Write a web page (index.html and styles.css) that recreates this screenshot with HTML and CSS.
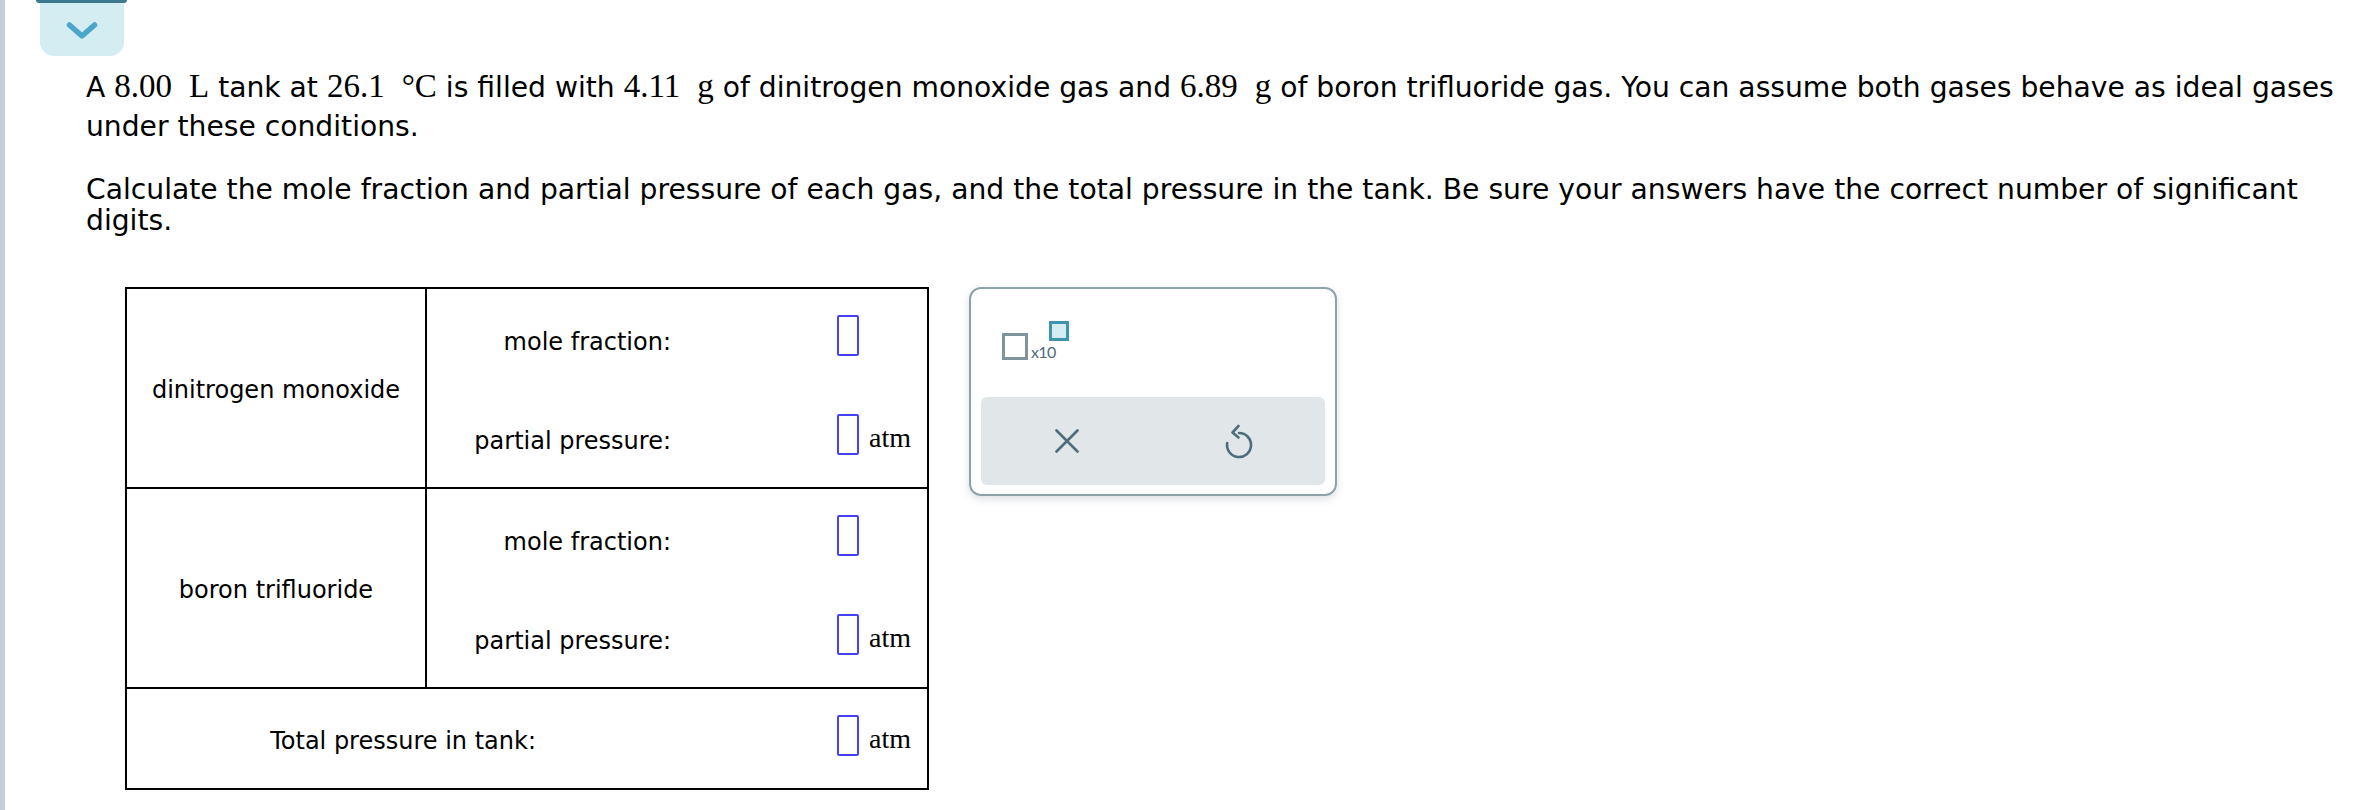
FILE: index.html
```html
<!DOCTYPE html>
<html lang="en">
<head>
<meta charset="utf-8">
<title>Mole fraction and partial pressure</title>
<link rel="stylesheet" href="styles.css">
</head>
<body>
<div class="page">
  <div class="rail"></div>
  <div class="content">
    <button class="toggle" type="button" aria-label="Collapse">
      <svg class="chev" width="84" height="56" viewBox="0 0 84 56"><polyline points="29.5,25 42,36 54.5,25" fill="none" stroke="#4ba7c9" stroke-width="5.5" stroke-linecap="round" stroke-linejoin="round"/></svg>
    </button>
    <p class="q"><span>A</span> <span class="m">8.00</span> <span class="m unit">L</span> <span>tank at</span> <span class="m">26.1</span> <span class="m unit">°C</span> <span>is filled with</span> <span class="m">4.11</span> <span class="m unit">g</span> <span>of dinitrogen monoxide gas and</span> <span class="m">6.89</span> <span class="m unit">g</span> <span>of boron trifluoride gas. You can assume both gases behave as ideal gases</span> <span>under these conditions.</span></p>
    <p class="q q2"><span>Calculate the mole fraction and partial pressure of each gas, and the total pressure in the tank. Be sure your answers have the correct number of significant</span> <span>digits.</span></p>
    <div class="work">
      <div class="answers">
        <div class="row">
          <div class="gas">dinitrogen monoxide</div>
          <div class="fields">
            <div class="field"><span class="label">mole fraction:</span><span class="box"></span></div>
            <div class="field"><span class="label">partial pressure:</span><span class="box"></span><span class="atm">atm</span></div>
          </div>
        </div>
        <div class="row">
          <div class="gas">boron trifluoride</div>
          <div class="fields">
            <div class="field"><span class="label">mole fraction:</span><span class="box"></span></div>
            <div class="field"><span class="label">partial pressure:</span><span class="box"></span><span class="atm">atm</span></div>
          </div>
        </div>
        <div class="row total">
          <span class="label">Total pressure in tank:</span><span class="box"></span><span class="atm">atm</span>
        </div>
      </div>
      <div class="widget">
        <div class="sci">
          <span class="sci-base"></span><span class="sci-x">x10</span><span class="sci-sup"></span>
        </div>
        <div class="pad">
          <button class="pad-btn" type="button" aria-label="Clear">
            <svg width="24" height="24" viewBox="0 0 24 24"><path d="M1.5 1.5 L22.5 22.5 M22.5 1.5 L1.5 22.5" fill="none" stroke="#4d6d7b" stroke-width="2.6" stroke-linecap="round"/></svg>
          </button>
          <button class="pad-btn" type="button" aria-label="Undo">
            <svg class="undo" width="32" height="36" viewBox="0 0 32 36"><path d="M16 10 A12 12 0 1 1 4.2 20" fill="none" stroke="#4d6d7b" stroke-width="2.6" stroke-linecap="round"/><polyline points="15.5,3 9.5,9.5 15.5,14.5" fill="none" stroke="#4d6d7b" stroke-width="2.6" stroke-linecap="round" stroke-linejoin="round"/></svg>
          </button>
        </div>
      </div>
    </div>
  </div>
</div>
</body>
</html>
```

FILE: styles.css
```css
html, body {
  margin: 0;
  padding: 0;
  background: #ffffff;
  overflow: hidden;
}

.page {
  display: flex;
  min-height: 810px;
}

.rail {
  flex: none;
  width: 5px;
  background: #c5d0d6;
}

.content {
  flex: 1;
  min-width: 0;
  padding-left: 35px;
  font-family: "DejaVu Sans", Verdana, sans-serif;
  color: #000000;
}

.toggle {
  position: relative;
  display: block;
  width: 84px;
  height: 56px;
  margin: 0;
  padding: 0;
  border: 0;
  background: #d4edf3;
  border-radius: 0 0 14px 14px;
  cursor: pointer;
}

.toggle::before {
  content: "";
  position: absolute;
  left: -4px;
  right: -3px;
  top: 0;
  height: 3px;
  background: #3b7a8e;
  border-radius: 0 0 3px 3px;
}

.chev {
  display: block;
}

.q {
  width: 2288px;
  margin: 5px 0 0 46px;
  font-size: 28.2px;
  line-height: 31px;
}

.q2 {
  margin-top: 32px;
}

.m {
  font-family: "Liberation Serif", "Times New Roman", serif;
  font-size: 33px;
  line-height: 50px;
}

.unit {
  margin-left: 8px;
}

.work {
  display: flex;
  align-items: flex-start;
  gap: 40px;
  margin: 51px 0 0 85px;
}

.answers {
  flex: none;
  width: 804px;
  box-sizing: border-box;
  border: 2px solid #000000;
  font-size: 24px;
}

.row {
  display: flex;
  height: 200px;
  box-sizing: border-box;
  border-bottom: 2px solid #000000;
}

.row.total {
  height: 99px;
  border-bottom: 0;
  align-items: center;
}

.gas {
  flex: none;
  width: 300px;
  box-sizing: border-box;
  border-right: 2px solid #000000;
  display: flex;
  align-items: center;
  justify-content: center;
  padding-top: 4px;
}

.fields {
  flex: 1;
  display: flex;
  flex-direction: column;
}

.field {
  height: 99px;
  display: flex;
  align-items: center;
}

.label {
  flex: none;
  width: 244px;
  text-align: right;
  padding-top: 6px;
}

.total .label {
  width: 409px;
  padding-top: 4px;
}

.box {
  flex: none;
  width: 22px;
  height: 41px;
  box-sizing: border-box;
  margin-left: 166px;
  border: 2px solid #4343ff;
  border-radius: 2px;
  margin-bottom: 6px;
}

.total .box {
  margin-left: 301px;
}

.atm {
  margin-left: 10px;
  font-family: "Liberation Serif", "Times New Roman", serif;
  font-size: 28px;
}

.widget {
  flex: none;
  width: 368px;
  height: 209px;
  box-sizing: border-box;
  border: 2px solid #8ea2ac;
  border-radius: 12px;
  padding: 0 10px 9px;
  display: flex;
  flex-direction: column;
  box-shadow: 0 3px 8px rgba(60, 80, 90, 0.18);
}

.sci {
  flex: 1;
  display: flex;
  align-items: flex-start;
  padding: 32px 0 0 21px;
}

.sci-base {
  flex: none;
  width: 26px;
  height: 27px;
  box-sizing: border-box;
  margin-top: 12px;
  border: 3px solid #7f949e;
}

.sci-x {
  margin: 23px 0 0 3px;
  font-family: Lato, "Open Sans", sans-serif;
  font-size: 16px;
  line-height: 16px;
  letter-spacing: -0.6px;
  color: #4f6b78;
}

.sci-sup {
  flex: none;
  width: 20px;
  height: 20px;
  box-sizing: border-box;
  margin-left: -7px;
  border: 3px solid #3e93ad;
  background: #d4ecf2;
}

.pad {
  flex: none;
  height: 88px;
  display: flex;
  background: #e1e6e9;
  border-radius: 6px;
}

.pad-btn {
  flex: 1;
  display: flex;
  align-items: center;
  justify-content: center;
  background: transparent;
  border: 0;
  padding: 0;
  cursor: pointer;
}

.pad-btn svg {
  display: block;
}
```
